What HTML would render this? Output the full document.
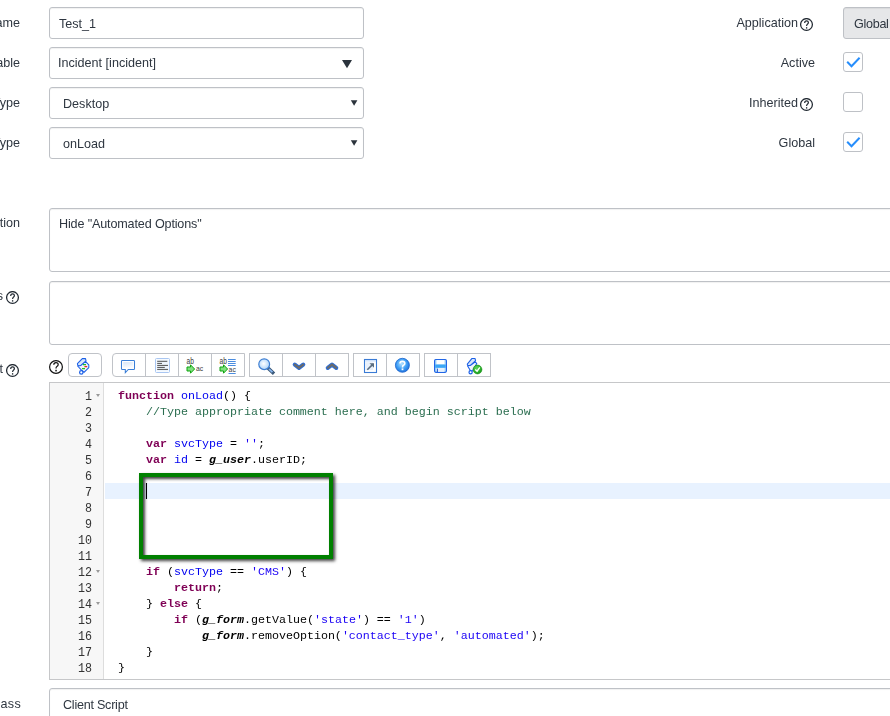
<!DOCTYPE html>
<html><head><meta charset="utf-8">
<style>
*{box-sizing:border-box;margin:0;padding:0}
html,body{width:890px;height:716px;overflow:hidden;background:#fff}
body{position:relative;font-family:"Liberation Sans",sans-serif;font-size:12.6px;color:#2e3640}
.a{position:absolute}
.txt,.lbl,.cl,.ln{will-change:transform}
.lbl{position:absolute;text-align:right;white-space:nowrap;line-height:16px}
.fld{position:absolute;border:1px solid #bec1c6;border-radius:3px;background:#fff;box-shadow:inset 0 1px 1px rgba(0,0,0,.06)}
.txt{position:absolute;white-space:nowrap;line-height:16px}
.help{position:absolute;width:13px;height:13px;border:1.3px solid #2e3640;border-radius:50%;font-size:9.5px;font-weight:bold;text-align:center;line-height:10.5px}
.cb{position:absolute;width:20px;height:20px;border:1px solid #bec1c6;border-radius:3px;background:#fff}
.grp{position:absolute;top:353px;height:24px;border:1px solid #bcbfc4;background:#fff}
.btn{position:absolute;top:0;height:22px;border-right:1px solid #bcbfc4}
.code{position:absolute;left:49px;top:382px;width:900px;height:298px;border:1px solid #c6c7c9;background:#fff;overflow:hidden}
.gut{position:absolute;left:0;top:0;width:54px;height:296px;background:#f7f7f7;border-right:1px solid #ddd}
.ln{position:absolute;left:0;width:42px;transform:translateY(1px) scaleY(1.15);transform-origin:0 12px;text-align:right;font-family:"Liberation Mono",monospace;font-size:11.66px;line-height:16px;color:#333}
.cl{position:absolute;left:68px;white-space:pre;font-family:"Liberation Mono",monospace;font-size:11.66px;line-height:16px;color:#000}
.k{color:#7f0055;font-weight:bold}
.v{color:#0000f0}
.s{color:#1a00f5}
.c{color:#2b6e50}
.g{font-weight:bold;font-style:italic}
.fold{position:absolute;left:46px;width:0;height:0;border-left:2.2px solid transparent;border-right:2.2px solid transparent;border-top:3.5px solid #999}
</style></head><body>

<!-- left labels -->
<div class="lbl" style="left:-200px;width:220px;top:15px">Name</div>
<div class="lbl" style="left:-200px;width:220px;top:55px">Table</div>
<div class="lbl" style="left:-200px;width:220px;top:95px">UI Type</div>
<div class="lbl" style="left:-200px;width:220px;top:135px">Type</div>
<div class="lbl" style="left:-200px;width:220px;top:215px">Description</div>
<div class="lbl" style="left:-200px;width:203px;top:288px">Messages</div>
<svg class="a" style="left:6px;top:291px" width="14" height="14" viewBox="0 0 14 14"><circle cx="6.5" cy="6.5" r="5.9" fill="none" stroke="#1f2730" stroke-width="1.25"/><path d="M4.7 4.9 Q4.7 2.9 6.6 2.9 Q8.4 2.9 8.4 4.6 Q8.4 5.6 7.4 6.2 Q6.6 6.7 6.6 8" fill="none" stroke="#1f2730" stroke-width="1.2"/><rect x="5.95" y="9.2" width="1.3" height="1.4" fill="#1f2730"/></svg>
<div class="lbl" style="left:-200px;width:203px;top:361px">Script</div>
<svg class="a" style="left:6px;top:364px" width="14" height="14" viewBox="0 0 14 14"><circle cx="6.5" cy="6.5" r="5.9" fill="none" stroke="#1f2730" stroke-width="1.25"/><path d="M4.7 4.9 Q4.7 2.9 6.6 2.9 Q8.4 2.9 8.4 4.6 Q8.4 5.6 7.4 6.2 Q6.6 6.7 6.6 8" fill="none" stroke="#1f2730" stroke-width="1.2"/><rect x="5.95" y="9.2" width="1.3" height="1.4" fill="#1f2730"/></svg>
<div class="lbl" style="left:-200px;width:221px;top:696px;letter-spacing:0.3px">Class</div>

<!-- fields -->
<div class="fld" style="left:49px;top:7px;width:315px;height:32px"></div>
<div class="txt" style="left:59px;top:16px">Test_1</div>
<div class="fld" style="left:49px;top:47px;width:315px;height:32px"></div>
<div class="txt" style="left:58px;top:55px">Incident [incident]</div>
<div class="fld" style="left:49px;top:87px;width:315px;height:32px"></div>
<div class="txt" style="left:63px;top:96px">Desktop</div>
<div class="fld" style="left:49px;top:127px;width:315px;height:32px"></div>
<div class="txt" style="left:63px;top:136px">onLoad</div>

<!-- right column -->
<div class="lbl" style="left:600px;width:198px;top:15px">Application</div>
<svg class="a" style="left:800px;top:18px" width="14" height="14" viewBox="0 0 14 14"><circle cx="6.5" cy="6.5" r="5.9" fill="none" stroke="#1f2730" stroke-width="1.25"/><path d="M4.7 4.9 Q4.7 2.9 6.6 2.9 Q8.4 2.9 8.4 4.6 Q8.4 5.6 7.4 6.2 Q6.6 6.7 6.6 8" fill="none" stroke="#1f2730" stroke-width="1.2"/><rect x="5.95" y="9.2" width="1.3" height="1.4" fill="#1f2730"/></svg>
<div class="fld" style="left:843px;top:7px;width:100px;height:32px;background:#e6e7e9"></div>
<div class="txt" style="left:854px;top:16px;letter-spacing:-0.3px">Global</div>
<div class="lbl" style="left:600px;width:215px;top:55px">Active</div>
<div class="cb" style="left:843px;top:52px"></div>
<div class="lbl" style="left:600px;width:198px;top:95px">Inherited</div>
<svg class="a" style="left:800px;top:98px" width="14" height="14" viewBox="0 0 14 14"><circle cx="6.5" cy="6.5" r="5.9" fill="none" stroke="#1f2730" stroke-width="1.25"/><path d="M4.7 4.9 Q4.7 2.9 6.6 2.9 Q8.4 2.9 8.4 4.6 Q8.4 5.6 7.4 6.2 Q6.6 6.7 6.6 8" fill="none" stroke="#1f2730" stroke-width="1.2"/><rect x="5.95" y="9.2" width="1.3" height="1.4" fill="#1f2730"/></svg>
<div class="cb" style="left:843px;top:92px"></div>
<div class="lbl" style="left:600px;width:215px;top:135px">Global</div>
<div class="cb" style="left:843px;top:132px"></div>

<!-- icons overlay -->
<svg class="a" style="left:0;top:0" width="890" height="180" viewBox="0 0 890 180">
<path d="M342 60 H352 L347 68.3 Z" fill="#2b333c"/>
<path d="M350.8 100.2 H357.4 L354.1 105.8 Z" fill="#2b333c"/>
<path d="M350.8 140.2 H357.4 L354.1 145.8 Z" fill="#2b333c"/>
<path d="M847.2 61.8 L851.5 66.2 L859.6 57.8" fill="none" stroke="#278efc" stroke-width="2"/>
<path d="M847.2 141.8 L851.5 146.2 L859.6 137.8" fill="none" stroke="#278efc" stroke-width="2"/>
</svg>

<!-- textareas -->
<div class="fld" style="left:49px;top:208px;width:900px;height:64px"></div>
<div class="txt" style="left:59px;top:216px;letter-spacing:-0.15px">Hide "Automated Options"</div>
<div class="fld" style="left:49px;top:281px;width:900px;height:64px"></div>

<!-- toolbar -->
<svg class="a" style="left:40px;top:350px" width="460" height="30" viewBox="40 350 460 30">
<defs>
<linearGradient id="lb" x1="0" y1="0" x2="0.3" y2="1"><stop offset="0" stop-color="#d6e6f8"/><stop offset="1" stop-color="#f6f9fe"/></linearGradient>
<radialGradient id="hb" cx="0.45" cy="0.4" r="0.65"><stop offset="0" stop-color="#b5e2ff"/><stop offset="0.55" stop-color="#3f9ff6"/><stop offset="1" stop-color="#1a68d8"/></radialGradient>
<radialGradient id="mg" cx="0.45" cy="0.45" r="0.6"><stop offset="0" stop-color="#ffffff"/><stop offset="1" stop-color="#a6d0fa"/></radialGradient>
<radialGradient id="gc" cx="0.4" cy="0.35" r="0.7"><stop offset="0" stop-color="#5fd85f"/><stop offset="1" stop-color="#129a12"/></radialGradient>
</defs>
<g fill="#fff" stroke="#c0c3c8" stroke-width="1">
<rect x="68.5" y="353.5" width="33" height="23" rx="3.5"/>
<path d="M244.5 353.5 H116 Q112.5 353.5 112.5 357 V373 Q112.5 376.5 116 376.5 H244.5 Z"/>
<path d="M145.5 354 V376 M178.5 354 V376 M211.5 354 V376"/>
<rect x="249.5" y="353.5" width="99" height="23"/>
<path d="M282.5 354 V376 M315.5 354 V376"/>
<rect x="353.5" y="353.5" width="66" height="23"/>
<path d="M386.5 354 V376"/>
<rect x="424.5" y="353.5" width="66" height="23"/>
<path d="M457.5 354 V376"/>
</g>
<!-- toolbar help -->
<g fill="none" stroke="#111" stroke-width="1.2">
<circle cx="56" cy="367" r="6.4"/>
<path d="M53.8 364.8 Q53.8 362.6 56 362.6 Q58.2 362.6 58.2 364.6 Q58.2 365.8 56.9 366.5 Q56 367 56 368.6"/>
</g>
<rect x="55.3" y="369.8" width="1.5" height="1.6" fill="#111"/>
<!-- scroll icon (script gen) -->
<g stroke="#1b5fe6" stroke-width="1.05" fill="#eef4fd" stroke-linejoin="round">
<path d="M85.5 361.3 L88.8 364.8 L88.8 367.6 L84 372.4 L81.5 370.2 L77.6 366 L80.5 365.3 Z"/>
<path d="M77.4 363.6 L82.3 358.6 H85.5 L86 360.8 L80.6 365.6 Q77.4 366.6 77.4 363.6 Z" fill="#d5e5fb"/>
<circle cx="81.3" cy="372.4" r="1.7" fill="#fff" stroke-width="1.2"/>
</g>
<path d="M83 364.6 H86 M82 368.6 H85" stroke="#1ec01e" stroke-width="1.2"/>
<path d="M84.4 366.6 H87.2" stroke="#e2301a" stroke-width="1.3"/>
<!-- comment bubble -->
<path d="M122.3 360.5 H133.7 Q134.5 360.5 134.5 361.3 V368.7 Q134.5 369.5 133.7 369.5 H128.3 L125.3 372.6 V369.5 H122.3 Q121.5 369.5 121.5 368.7 V361.3 Q121.5 360.5 122.3 360.5 Z" fill="#fff" stroke="#3a7fd8" stroke-width="1.05"/>
<rect x="123.2" y="362.1" width="9.6" height="5.5" fill="url(#lb)"/>
<!-- format -->
<rect x="155.5" y="358.5" width="14" height="14" rx="1" fill="#fff" stroke="#a9c6f2" stroke-width="1"/>
<rect x="156.5" y="359.5" width="12" height="12" fill="#eef5fd"/>
<g stroke="#505050" stroke-width="1">
<path d="M157.2 361.3 H167.3 M157.2 363.4 H162 M157.2 365.4 H168 M157.2 367.4 H164.8 M157.2 369.4 H168"/>
</g>
<!-- replace -->
<g font-family="Liberation Sans, sans-serif" fill="#3a3a3a">
<text x="186.6" y="364" font-size="8.3" textLength="7.4" lengthAdjust="spacingAndGlyphs">ab</text>
<text x="195.9" y="371" font-size="7.6" textLength="7.2" lengthAdjust="spacingAndGlyphs">ac</text>
<text x="219.6" y="364.2" font-size="8.3" textLength="7.4" lengthAdjust="spacingAndGlyphs">ab</text>
<text x="228.6" y="372" font-size="7.6" textLength="7.2" lengthAdjust="spacingAndGlyphs">ac</text>
</g>
<path d="M187 367 H190.5 V364.8 L194.6 369 L190.5 373.2 V371 H187 Z" fill="#7fe07f" stroke="#0fa30f" stroke-width="1"/>
<path d="M220 367 H223.5 V364.8 L227.6 369 L223.5 373.2 V371 H220 Z" fill="#7fe07f" stroke="#0fa30f" stroke-width="1"/>
<g stroke="#4b8de0" stroke-width="1">
<path d="M228 359.5 H235.7 M228 361.5 H235.7 M228 363.5 H235.7 M228 365.5 H235.7 M228.5 373.5 H235.7"/>
</g>
<!-- magnifier -->
<path d="M268.6 368.6 L272.8 372.6" stroke="#3d5a7a" stroke-width="3.4" stroke-linecap="square"/>
<path d="M269 369 L272.4 372.2" stroke="#8ab8f2" stroke-width="1.7" stroke-linecap="butt"/>
<circle cx="264.2" cy="364.2" r="5.4" fill="url(#mg)" stroke="#3f7fd2" stroke-width="1.2"/>
<!-- chevrons -->
<path d="M294.8 364.6 L299 367.9 L303.2 364.6" fill="none" stroke="#2f6fd6" stroke-width="4.2" stroke-linejoin="round" stroke-linecap="round"/>
<path d="M294.8 364.6 L299 367.9 L303.2 364.6" fill="none" stroke="#6a6a6a" stroke-width="2" stroke-linecap="round"/>
<path d="M327.8 367.9 L332 364.6 L336.2 367.9" fill="none" stroke="#2f6fd6" stroke-width="4.2" stroke-linejoin="round" stroke-linecap="round"/>
<path d="M327.8 367.9 L332 364.6 L336.2 367.9" fill="none" stroke="#6a6a6a" stroke-width="2" stroke-linecap="round"/>
<!-- fullscreen -->
<rect x="364.5" y="359.5" width="12" height="13" fill="#fff" stroke="#3a7bd5" stroke-width="1.1"/>
<rect x="365" y="360" width="11" height="1.6" fill="#cfe2fb"/>
<rect x="365.2" y="362.2" width="8" height="8" fill="#e8f0fb"/>
<path d="M367.3 369.8 L373 364.1" stroke="#5a6d80" stroke-width="1.6"/>
<path d="M369.5 363.3 H374 V367.8 Z" fill="#5a6d80"/>
<!-- help blue -->
<circle cx="402.4" cy="365.3" r="7" fill="url(#hb)" stroke="#1a63cc" stroke-width="0.8"/>
<path d="M400 363.6 Q400 361.4 402.4 361.4 Q404.8 361.4 404.8 363.4 Q404.8 364.6 403.4 365.3 Q402.5 365.8 402.5 367.4" fill="none" stroke="#fff" stroke-width="1.6"/>
<rect x="401.6" y="368.4" width="1.8" height="1.8" fill="#fff"/>
<!-- floppy -->
<rect x="434.6" y="359.5" width="11.8" height="12.8" rx="1.2" fill="#b5e0fc" stroke="#2266e6" stroke-width="1.2"/>
<rect x="436.6" y="360.1" width="7.8" height="4.3" fill="#fff"/>
<rect x="435.2" y="364.5" width="10.6" height="3.3" fill="#3aa6f6"/>
<rect x="437" y="368" width="7.4" height="3.9" fill="#e6f0fb"/>
<rect x="437" y="368.6" width="1" height="3.4" fill="#3a5fd0"/>
<!-- scroll check -->
<g stroke="#1b5fe6" stroke-width="1.05" fill="#eef4fd" stroke-linejoin="round">
<path d="M475.3 361.8 L476.8 363.6 L472.5 371 L470.5 370.8 L467.6 366 L470.4 365.2 Z"/>
<path d="M467.3 364.2 L472 358.4 H475 L475.6 360.6 L470.4 365.3 Q467.3 366.2 467.3 364.2 Z" fill="#d5e5fb"/>
<circle cx="470.6" cy="372.3" r="1.6" fill="#fff" stroke-width="1.2"/>
</g>
<circle cx="477.5" cy="369.5" r="4.4" fill="url(#gc)" stroke="#0d8a0d" stroke-width="0.6"/>
<path d="M475.2 369.4 L477.1 371.1 L479.8 367.4" fill="none" stroke="#fff" stroke-width="1.4"/>
</svg>

<!-- code -->
<div class="code">
<div class="gut"></div>
<div class="hl" style="position:absolute;left:55px;top:100px;width:900px;height:16px;background:#e8f2ff"></div>
<div class="ln" style="top:5px">1</div>
<div class="fold" style="top:11px"></div>
<div class="cl" style="top:5px"><span class="k">function</span> <span class="v">onLoad</span>() {</div>
<div class="ln" style="top:21px">2</div>
<div class="cl" style="top:21px">    <span class="c">//Type appropriate comment here, and begin script below</span></div>
<div class="ln" style="top:37px">3</div>
<div class="cl" style="top:37px"></div>
<div class="ln" style="top:53px">4</div>
<div class="cl" style="top:53px">    <span class="k">var</span> <span class="v">svcType</span> = <span class="s">''</span>;</div>
<div class="ln" style="top:69px">5</div>
<div class="cl" style="top:69px">    <span class="k">var</span> <span class="v">id</span> = <span class="g">g_user</span>.userID;</div>
<div class="ln" style="top:85px">6</div>
<div class="cl" style="top:85px"></div>
<div class="ln" style="top:101px">7</div>
<div class="cl" style="top:101px"></div>
<div class="ln" style="top:117px">8</div>
<div class="cl" style="top:117px"></div>
<div class="ln" style="top:133px">9</div>
<div class="cl" style="top:133px"></div>
<div class="ln" style="top:149px">10</div>
<div class="cl" style="top:149px"></div>
<div class="ln" style="top:165px">11</div>
<div class="cl" style="top:165px"></div>
<div class="ln" style="top:181px">12</div>
<div class="fold" style="top:187px"></div>
<div class="cl" style="top:181px">    <span class="k">if</span> (<span class="v">svcType</span> == <span class="s">'CMS'</span>) {</div>
<div class="ln" style="top:197px">13</div>
<div class="cl" style="top:197px">        <span class="k">return</span>;</div>
<div class="ln" style="top:213px">14</div>
<div class="fold" style="top:219px"></div>
<div class="cl" style="top:213px">    } <span class="k">else</span> {</div>
<div class="ln" style="top:229px">15</div>
<div class="cl" style="top:229px">        <span class="k">if</span> (<span class="g">g_form</span>.getValue(<span class="s">'state'</span>) == <span class="s">'1'</span>)</div>
<div class="ln" style="top:245px">16</div>
<div class="cl" style="top:245px">            <span class="g">g_form</span>.removeOption(<span class="s">'contact_type'</span>, <span class="s">'automated'</span>);</div>
<div class="ln" style="top:261px">17</div>
<div class="cl" style="top:261px">    }</div>
<div class="ln" style="top:277px">18</div>
<div class="cl" style="top:277px">}</div>
<div style="position:absolute;left:96px;top:100px;width:1px;height:16px;background:#000"></div>
</div>

<div style="position:absolute;left:139px;top:473px;width:194px;height:86px;border:4px solid #008000;box-shadow:2px 2px 3px rgba(0,0,0,.75), inset 2px 2px 3px rgba(0,0,0,.75)"></div>

<!-- class -->
<div class="fld" style="left:49px;top:688px;width:900px;height:40px"></div>
<div class="txt" style="left:63px;top:697px;letter-spacing:-0.25px">Client Script</div>

</body></html>
